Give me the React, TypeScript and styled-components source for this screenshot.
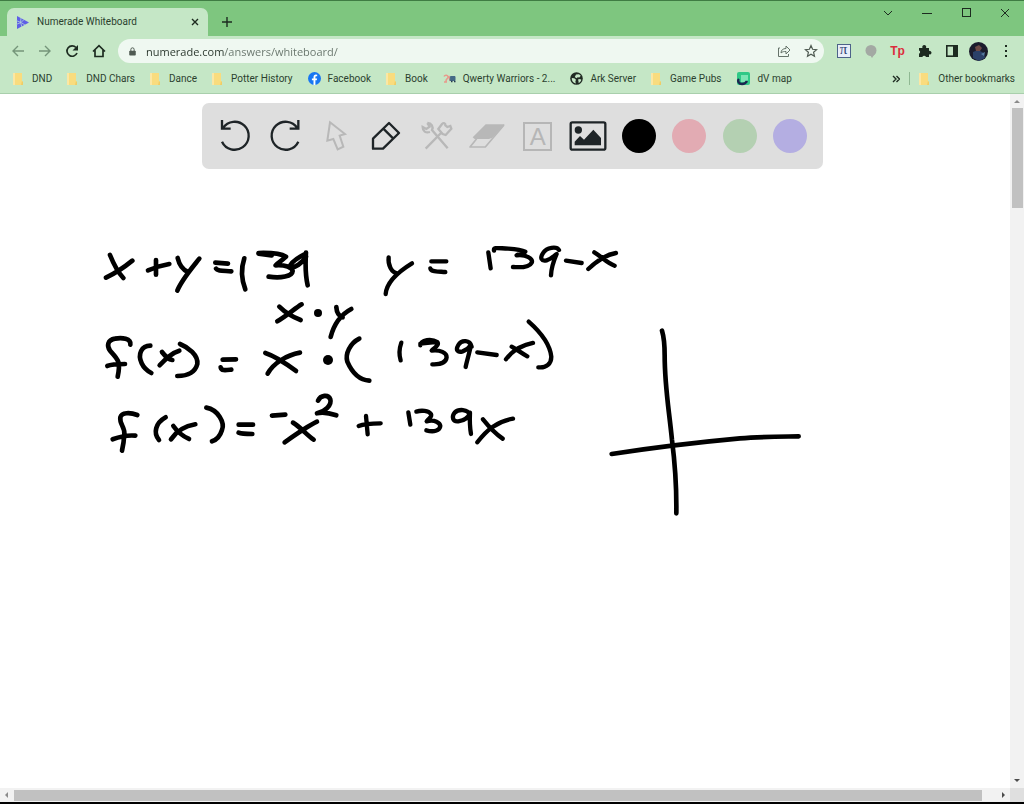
import React from "react";
import styled, { createGlobalStyle } from "styled-components";

const GlobalStyle = createGlobalStyle`
  *, *::before, *::after { box-sizing: border-box; }
  body {
    margin: 0;
    background: #fff;
    font-family: Roboto, "Open Sans", sans-serif;
    color: #2b3f2e;
  }
  button, input { font: inherit; color: inherit; }
`;

const Window = styled.div`
  display: flex;
  flex-direction: column;
  min-height: 100vh;
  border-top: 1px solid #3f7c43;
  border-bottom: 2px solid #000;
`;

const PlainButton = styled.button`
  display: flex;
  align-items: center;
  justify-content: center;
  flex: none;
  padding: 0;
  border: 0;
  background: none;
`;

/* ---------- tab strip ---------- */

const TabStrip = styled.header`
  display: flex;
  align-items: flex-end;
  height: 35px;
  padding-left: 7px;
  background: #7ec67f;
`;

const Tab = styled.div`
  display: flex;
  align-items: center;
  gap: 8px;
  width: 201px;
  height: 28px;
  padding: 0 5px 0 9px;
  border-radius: 7px 7px 0 0;
  background: #c5e7c6;
`;

const TabTitle = styled.span`
  flex: 1;
  font-size: 10px;
  line-height: 16px;
  white-space: nowrap;
`;

const TabButton = styled(PlainButton)`
  width: 16px;
  height: 16px;
`;

const NewTab = styled(PlainButton)`
  width: 38px;
  height: 28px;
`;

const WindowControls = styled.div`
  display: flex;
  align-self: flex-start;
  margin-left: auto;
`;

const WindowButton = styled(PlainButton)`
  width: 39px;
  height: 24px;
`;

/* ---------- address row ---------- */

const AddressRow = styled.div`
  display: flex;
  align-items: center;
  height: 30px;
  padding: 0 5px 0 4px;
  background: #c5e7c6;
`;

const NavButton = styled(PlainButton)`
  width: 27px;
  height: 27px;
`;

const Omnibox = styled.div`
  display: flex;
  align-items: center;
  flex: 1;
  height: 24px;
  margin: 0 6px;
  padding-left: 10px;
  border-radius: 12px;
  background: #eff8f1;
`;

const Url = styled.input`
  flex: 1;
  min-width: 0;
  height: 20px;
  margin-left: 9px;
  padding: 0;
  border: 0;
  outline: 0;
  font: 11px "Open Sans", sans-serif;
  color: #4d5a50;
  background: linear-gradient(90deg, #27342a 78px, #66736a 78px);
  background-clip: text;
  -webkit-text-fill-color: transparent;
`;

const PiBadge = styled.span`
  width: 14px;
  height: 14px;
  border: 1px solid #4d6289;
  background: #e8eef8;
  font: 15px/9px "Liberation Serif", serif;
  color: #2f4474;
`;

const TpBadge = styled.span`
  font: 700 12px/14px "Liberation Sans", sans-serif;
  color: #dc2c3c;
`;

/* ---------- bookmarks ---------- */

const BookmarksBar = styled.nav`
  display: flex;
  align-items: center;
  gap: 15px;
  height: 28px;
  padding: 0 9px 2px 13px;
  border-bottom: 1px solid #a9cfac;
  background: #c5e7c6;
`;

const Bookmark = styled.a`
  display: flex;
  align-items: center;
  gap: 7px;
  font-size: 10px;
  line-height: 16px;
  white-space: nowrap;
  text-decoration: none;
  color: inherit;
`;

const Overflow = styled.div`
  display: flex;
  align-items: center;
  gap: 9px;
  margin-left: auto;
`;

const Divider = styled.span`
  width: 1px;
  height: 13px;
  background: #8fb892;
`;

/* ---------- page ---------- */

const Page = styled.div`
  display: flex;
  flex: 1;
`;

const Board = styled.main`
  display: flex;
  flex-direction: column;
  flex: 1;
  min-width: 0;
  background: #fff;
`;

const ToolRow = styled.div`
  display: flex;
  justify-content: center;
  padding: 9px 0 0 15px;
`;

const Tools = styled.div`
  display: flex;
  align-items: center;
  justify-content: space-between;
  width: 621px;
  height: 66px;
  padding: 0 14px;
  border-radius: 7px;
  background: #dedede;
`;

const Tool = styled(PlainButton)`
  width: 38px;
  height: 38px;
`;

const TextGlyph = styled.span`
  width: 29px;
  height: 29px;
  border: 2px solid #b6b6b6;
  font: 24px/25px "Liberation Sans", sans-serif;
  color: #b6b6b6;
`;

const Swatch = styled.span<{ $color: string }>`
  width: 34px;
  height: 34px;
  border-radius: 50%;
  background: ${(p) => p.$color};
`;

const Canvas = styled.svg`
  display: block;
  flex: 1;
  width: 100%;
  min-height: 360px;
`;

const VerticalBar = styled.div`
  display: flex;
  flex-direction: column;
  align-items: center;
  width: 14px;
  background: #f2f2f2;
`;

const VerticalThumb = styled.div`
  width: 11px;
  height: 100px;
  background: #c1c1c1;
`;

const HorizontalBar = styled.div`
  display: flex;
  align-items: center;
  height: 14px;
  background: #f2f2f2;
`;

const HorizontalThumb = styled.div`
  flex: 1;
  height: 11px;
  margin-right: 14px;
  background: #c1c1c1;
`;

const Arrow = styled(PlainButton)`
  width: 14px;
  height: 14px;
`;

const BottomArrow = styled(Arrow)`
  margin-top: auto;
`;

const Corner = styled.div`
  width: 14px;
  height: 14px;
  background: #dfdfdf;
`;

/* ---------- icons ---------- */

type IconProps = { size?: number; box?: string; stroke?: string; width?: number; children: React.ReactNode };

const Icon = ({ size = 14, box = "0 0 14 14", stroke = "#1d2b20", width = 1.4, children }: IconProps) => (
  <svg width={size} height={size} viewBox={box} fill="none" stroke={stroke} strokeWidth={width} aria-hidden="true">
    {children}
  </svg>
);

const FolderIcon = () => (
  <Icon size={12} box="0 0 12 12" stroke="none">
    <path d="M0 0h9v8l1 1v3H0z" fill="#f9dc7e" />
    <path d="M0 0h2v12H0z" fill="#fbe7a4" />
    <path d="M9 8l1 1v3H8z" fill="#efcd66" />
  </Icon>
);

const FacebookIcon = () => (
  <Icon size={13} box="0 0 13 13" stroke="none">
    <circle cx="6.500" cy="6.500" r="6.500" fill="#1877f2" />
    <path d="M5.500 13V8.300H3.900V6.500h1.600V5.200c0-1.700 1-2.600 2.400-2.600l1.300.1v1.600h-.8c-.8 0-1 .5-1 1v1.200h1.700l-.3 1.800H7.400V13z" fill="#fff" />
  </Icon>
);

const QwertyIcon = () => (
  <Icon size={13} box="0 0 13 13" width={1.5}>
    <path d="M1 4.500C2 2.500 5 3 5 5S2.500 7 3 9.500M6 4l1 5M1 10h3" stroke="#e79a8c" />
    <path d="M7.500 4.500H12v4H7z" fill="#456a86" stroke="#456a86" strokeWidth="1" />
    <path d="M8 9.500h1.500M11 9.500h1.500" stroke="#26384a" />
  </Icon>
);

const GlobeIcon = () => (
  <Icon size={13} box="0 0 13 13" stroke="none">
    <circle cx="6.500" cy="6.500" r="6.300" fill="#202a23" />
    <path d="M1.800 6l2.500.3L6 7.800l-.6 1.400.4 2.200C3 11 1.500 8.500 1.800 6zM6 2.500l3-.3 1.800 1.600-1.500 1.700-1.600-.2-1.200.9L4.800 5zM8 7.500l2-.5 1.300.7c-.4 1.700-1.300 2.700-2.700 3.300L8.500 9.300z" fill="#c5e7c6" />
  </Icon>
);

const MapIcon = () => (
  <Icon size={14} box="0 0 14 14" stroke="none">
    <rect x="1" width="13" height="13" rx="2" fill="#2fc987" />
    <path d="M5 3h7v5l-3 2H5z" fill="#7be6b4" />
    <path d="M3 7C1 9 3 12 6 12c2.500 0 4-1 5-3" fill="none" stroke="#1c2650" strokeWidth="2.400" />
  </Icon>
);

type Link = { label: string; icon: () => React.ReactElement };

const bookmarks: Link[] = [
  { label: "DND", icon: FolderIcon },
  { label: "DND Chars", icon: FolderIcon },
  { label: "Dance", icon: FolderIcon },
  { label: "Potter History", icon: FolderIcon },
  { label: "Facebook", icon: FacebookIcon },
  { label: "Book", icon: FolderIcon },
  { label: "Qwerty Warriors - 2...", icon: QwertyIcon },
  { label: "Ark Server", icon: GlobeIcon },
  { label: "Game Pubs", icon: FolderIcon },
  { label: "dV map", icon: MapIcon },
];

const ink = "#1e2427";
const faded = "#b8b8b8";

const drawingTools = [
  {
    label: "Undo",
    art: (
      <Icon size={38} box="63 66 114 114" stroke={ink} width={7}>
        <path d="M81 75V101H107M84 99A42 42 0 1 1 81 140" />
      </Icon>
    ),
  },
  {
    label: "Redo",
    art: (
      <Icon size={38} box="213 66 114 114" stroke={ink} width={7}>
        <path d="M310 75V101H284M307 99A42 42 0 1 0 310 140" />
      </Icon>
    ),
  },
  {
    label: "Select",
    art: (
      <Icon size={38} box="365 66 114 114" stroke={faded} width={6}>
        <path d="M404 82L449 117L433 122L444 155L427 163L414 132L396 137Z" />
      </Icon>
    ),
  },
  {
    label: "Pen",
    art: (
      <Icon size={38} box="516 66 114 114" stroke={ink} width={7}>
        <path d="M582 84L612 114L564 161H534V131ZM565 101L595 131" strokeLinejoin="round" />
      </Icon>
    ),
  },
  {
    label: "Tools",
    art: (
      <Icon size={38} box="667 66 114 114" stroke={faded} width={7}>
        <path d="M695 84C708 85 714 95 709 105L756 160M695 84L702 95L692 102L681 96C681 109 690 115 703 111" />
        <path d="M690 161L736 114M728 102L739 87C744 82 750 85 749 91L755 96L764 93L767 101L750 120L741 117Z" />
      </Icon>
    ),
  },
  {
    label: "Eraser",
    art: (
      <Icon size={38} box="822 66 114 114" stroke={faded} width={5}>
        <path d="M875 88H932L895 128L885 132H842L836 127Z" fill={faded} stroke="none" />
        <path d="M848 131L828 156H874L930 90" strokeLinejoin="round" />
      </Icon>
    ),
  },
  { label: "Text", art: <TextGlyph>A</TextGlyph> },
  {
    label: "Image",
    art: (
      <Icon size={38} box="180 65 114 114" stroke={ink} width={7}>
        <rect x="185" y="81" width="104" height="82" rx="5" />
        <circle cx="208" cy="104" r="11" fill={ink} stroke="none" />
        <path d="M197 150V139L213 122L225 133L253 103L276 128V150Z" fill={ink} stroke="none" />
      </Icon>
    ),
  },
];

const swatches = [
  { label: "Black", color: "#000000" },
  { label: "Pink", color: "#e2abb3" },
  { label: "Green", color: "#b4d0b2" },
  { label: "Purple", color: "#b4aee2" },
];

/* Pen strokes, stored at three units per pixel; each group has its own origin on the board. */
const strokeGroups = [
  {
    id: "left-column",
    origin: "90 61",
    width: 14,
    d: [
      "M60 75C72 105 85 128 100 144M48 143C75 130 105 110 127 92",
      "M198 90V134M174 121C195 112 215 106 238 102",
      "M263 84C268 105 280 120 294 126M328 86C305 115 275 150 262 182",
      "M376 98L414 101M378 116C382 123 400 122 424 124",
      "M463 85C453 115 455 150 466 178",
      "M506 69C540 68 575 72 588 80C576 92 562 99 557 106C585 104 607 112 608 123C607 139 572 146 536 140",
      "M506 71L545 76",
      "M645 72C622 84 600 100 599 112C614 116 638 98 648 80M648 68C646 100 646 135 653 166",
      "M568 230C585 247 610 262 632 270M562 274C590 258 615 235 635 223",
      "M739 231C740 248 748 260 758 262M784 237C750 255 730 290 722 321",
      "M121 344C124 325 95 322 75 326C52 330 50 348 60 362C84 388 93 395 83 440M52 408C65 402 85 402 105 402",
      "M181 347C155 347 142 372 155 400C162 415 172 423 184 429",
      "M209 406C225 388 245 369 268 362M216 366C225 378 236 388 247 390",
      "M270 342C295 352 325 375 322 402C315 428 290 438 262 438",
      "M398 389L438 388M392 412C395 423 405 421 424 419",
      "M526 369C560 380 590 402 618 423M533 431C550 400 590 375 630 368",
      "M709 391L717 390M808 326C780 340 765 372 772 395C785 425 805 450 838 452",
      "M142 555C120 547 95 547 91 562C88 582 105 592 103 612C102 632 100 645 96 662M68 628C90 620 115 615 136 617",
      "M227 562C195 580 190 610 207 630M250 588C262 605 275 617 297 627M243 628C258 606 285 588 316 583",
      "M349 533C385 540 405 578 396 600C390 620 378 630 366 634",
      "M446 584H489M446 608C455 612 470 612 487 612M546 557L586 554",
      "M609 578C630 590 650 615 671 629M584 637C615 615 650 590 681 575",
      "M684 512C692 495 715 492 721 508C726 525 705 545 681 550C700 545 715 548 739 556",
    ],
  },
  {
    id: "right-column",
    origin: "350 61",
    width: 13,
    d: [
      "M116 82C113 105 125 128 142 130M186 100C150 122 110 155 107 192",
      "M244 94H289M241 115C243 125 255 124 286 126",
      "M415 67L422 115M432 62C430 50 445 55 475 56C500 58 515 60 526 65C515 70 505 73 500 76C530 72 550 88 545 98C538 112 515 113 489 111",
      "M627 60C620 48 590 52 580 68C568 85 575 95 590 91C605 87 615 75 620 72C610 95 604 115 603 136",
      "M648 92L695 99M733 67C755 80 770 98 794 107M715 117C735 98 765 74 798 69",
      "M154 338C147 358 147 375 152 391",
      "M211 346C213 328 245 325 262 336C268 344 258 350 245 362C270 359 291 368 290 382C288 398 270 404 247 403M211 341L255 336",
      "M365 350C360 330 335 328 325 345C315 362 325 368 338 364C350 360 360 350 363 345C358 370 350 395 347 411",
      "M382 367L440 375M485 350C500 358 515 370 532 379M468 388C490 358 520 345 549 339",
      "M536 275C570 305 600 345 604 380C604 400 590 415 565 412",
      "M48 558L53 613M26 588C45 580 65 580 92 580",
      "M175 547L181 584M199 545C215 540 235 542 243 552C247 560 240 562 230 574C255 568 270 578 271 588C270 603 250 607 229 601",
      "M360 556C354 536 325 537 314 548C304 560 308 576 325 574C345 571 357 560 360 548C359 570 359 590 363 612",
      "M399 568C415 588 438 612 458 626M382 637C410 600 440 575 489 566",
    ],
  },
  {
    id: "axes",
    origin: "600 141",
    width: 14,
    d: [
      "M186 62C192 82 194 104 194 136C194 230 206 290 216 390C225 460 230 530 229 610",
      "M35 432C150 414 300 396 420 385C480 380 540 380 596 379",
    ],
  },
];

export default function App() {
  return (
    <Window>
      <GlobalStyle />
      <TabStrip>
        <Tab>
          <Icon size={13} box="0 0 13 13" stroke="none">
            <path d="M1 0L13 6.500 1 13Z" fill="#5f5fe6" />
            <path d="M0 4.500l5 2-5 2M5 2L4.500 6.500 6 11M8 3.500L5 6.500l4 2.500" stroke="#b3d2dc" strokeWidth=".8" fill="none" />
          </Icon>
          <TabTitle>Numerade Whiteboard</TabTitle>
          <TabButton aria-label="Close tab">
            <Icon size={8} box="0 0 8 8"><path d="M1 1l6 6M7 1L1 7" /></Icon>
          </TabButton>
        </Tab>
        <NewTab aria-label="New tab">
          <Icon size={10} box="0 0 10 10"><path d="M5 0v10M0 5h10" /></Icon>
        </NewTab>
        <WindowControls>
          <WindowButton aria-label="Search tabs">
            <Icon size={10} box="0 0 10 10" width={1}><path d="M1 3l4 4 4-4" /></Icon>
          </WindowButton>
          <WindowButton aria-label="Minimize">
            <Icon size={10} box="0 0 10 10" width={1}><path d="M0 5.500h10" /></Icon>
          </WindowButton>
          <WindowButton aria-label="Maximize">
            <Icon size={10} box="0 0 10 10" width={1}><rect x="1.500" y=".5" width="8" height="8" /></Icon>
          </WindowButton>
          <WindowButton aria-label="Close">
            <Icon size={10} box="0 0 10 10" width={1}><path d="M1 1l8 8M9 1L1 9" /></Icon>
          </WindowButton>
        </WindowControls>
      </TabStrip>

      <AddressRow>
        <NavButton aria-label="Back">
          <Icon stroke="#75957a"><path d="M13 7H2M7 2L2 7l5 5" /></Icon>
        </NavButton>
        <NavButton aria-label="Forward">
          <Icon stroke="#75957a"><path d="M1 7h11M7 2l5 5-5 5" /></Icon>
        </NavButton>
        <NavButton aria-label="Reload">
          <Icon width={1.7}>
            <path d="M12 9A5.200 5.200 0 1 1 11 3.500" />
            <path d="M13 1v5.500H7.500z" fill="#1d2b20" stroke="none" />
          </Icon>
        </NavButton>
        <NavButton aria-label="Home">
          <Icon width={1.7}><path d="M1 7.500L7 1.700l6 5.800M3 6v6.500h8V6" /></Icon>
        </NavButton>
        <Omnibox>
          <Icon size={9} box="0 0 9 11" stroke="#4f5a52" width={1.2}>
            <path d="M2.500 5V3a2 2 0 0 1 4 0v2" />
            <rect x=".5" y="4.500" width="8" height="6" rx="1" fill="#4f5a52" stroke="none" />
          </Icon>
          <Url aria-label="Address" defaultValue="numerade.com/answers/whiteboard/" />
          <NavButton aria-label="Share">
            <Icon stroke="#66736a" width={1}>
              <path d="M3 4H1.500v8.500h10V10M4 9c0-3 2-4.500 5-4.500V2l4 4-4 4V7.500C7 7.500 5.500 7.500 4 9z" />
            </Icon>
          </NavButton>
          <NavButton aria-label="Bookmark this page">
            <Icon stroke="#4f5a52" width={1.2}>
              <path d="M7 1.600l1.600 3.700 4 .4-3 2.600.9 4L7 10.200l-3.500 2.100.9-4-3-2.600 4-.4z" />
            </Icon>
          </NavButton>
        </Omnibox>
        <NavButton aria-label="Equation editor"><PiBadge>π</PiBadge></NavButton>
        <NavButton aria-label="Chat">
          <Icon stroke="none">
            <circle cx="7" cy="6.500" r="5.500" fill="#a3a9a3" />
            <path d="M6 11h4l-2 3z" fill="#a3a9a3" />
          </Icon>
        </NavButton>
        <NavButton aria-label="Teleparty"><TpBadge>Tp</TpBadge></NavButton>
        <NavButton aria-label="Extensions">
          <Icon stroke="none">
            <path d="M1 4h3.500a2 2 0 1 1 3.500 0h3v3a1.800 1.800 0 1 1 0 3.300V13H8a2 2 0 0 0-3.700 0H1V9.700A1.700 1.700 0 0 0 1 6.500z" fill="#1d2b20" />
          </Icon>
        </NavButton>
        <NavButton aria-label="Side panel">
          <Icon width={1.6}>
            <rect x="1.800" y="1.800" width="10.400" height="10.400" />
            <path d="M8 2h4v10H8z" fill="#1d2b20" stroke="none" />
          </Icon>
        </NavButton>
        <NavButton aria-label="Profile">
          <Icon size={19} box="0 0 19 19" stroke="none">
            <circle cx="9.500" cy="9.500" r="9.500" fill="#1b1c2c" />
            <path d="M4 10l5-2 6 3 1 5-6 3-6-3z" fill="#2b4068" />
            <path d="M6 5l4-2 3 3-2 3H7z" fill="#6d4a46" />
            <path d="M12 12l4-2-1 4z" fill="#567ba0" />
          </Icon>
        </NavButton>
        <NavButton aria-label="Menu">
          <Icon stroke="none">
            <path d="M6 1h2v2H6zM6 6h2v2H6zM6 11h2v2H6z" fill="#1d2b20" />
          </Icon>
        </NavButton>
      </AddressRow>

      <BookmarksBar aria-label="Bookmarks">
        {bookmarks.map(({ label, icon: Glyph }) => (
          <Bookmark key={label} href="#">
            <Glyph />
            {label}
          </Bookmark>
        ))}
        <Overflow>
          <PlainButton aria-label="More bookmarks">
            <Icon size={8} box="0 0 8 8"><path d="M1 1l3 3-3 3M4.500 1l3 3-3 3" /></Icon>
          </PlainButton>
          <Divider />
          <Bookmark href="#">
            <FolderIcon />
            Other bookmarks
          </Bookmark>
        </Overflow>
      </BookmarksBar>

      <Page>
        <Board>
          <ToolRow>
            <Tools role="toolbar" aria-label="Drawing tools">
              {drawingTools.map((tool) => (
                <Tool key={tool.label} aria-label={tool.label}>{tool.art}</Tool>
              ))}
              {swatches.map((swatch) => (
                <Tool key={swatch.label} aria-label={swatch.label}>
                  <Swatch $color={swatch.color} />
                </Tool>
              ))}
            </Tools>
          </ToolRow>
          <Canvas role="img" aria-label="Handwritten equations and a pair of axes">
            {strokeGroups.map((group) => (
              <g
                key={group.id}
                transform={`translate(${group.origin}) scale(.3333)`}
                fill="none"
                stroke="#000"
                strokeWidth={group.width}
                strokeLinecap="round"
                strokeLinejoin="round"
              >
                {group.d.map((d) => <path key={d} d={d} />)}
              </g>
            ))}
            <circle cx="318" cy="144" r="4" />
            <circle cx="328" cy="191" r="5" />
          </Canvas>
        </Board>
        <VerticalBar>
          <Arrow aria-label="Scroll up">
            <Icon size={6} box="0 0 6 6" stroke="none"><path d="M0 5l3-3 3 3z" fill="#8b8b8b" /></Icon>
          </Arrow>
          <VerticalThumb />
          <BottomArrow aria-label="Scroll down">
            <Icon size={6} box="0 0 6 6" stroke="none"><path d="M0 1h6L3 4z" fill="#4c4c4c" /></Icon>
          </BottomArrow>
        </VerticalBar>
      </Page>
      <HorizontalBar>
        <Arrow aria-label="Scroll left">
          <Icon size={6} box="0 0 6 6" stroke="none"><path d="M4 0v6L1 3z" fill="#8b8b8b" /></Icon>
        </Arrow>
        <HorizontalThumb />
        <Arrow aria-label="Scroll right">
          <Icon size={6} box="0 0 6 6" stroke="none"><path d="M2 0v6l3-3z" fill="#4c4c4c" /></Icon>
        </Arrow>
        <Corner />
      </HorizontalBar>
    </Window>
  );
}
